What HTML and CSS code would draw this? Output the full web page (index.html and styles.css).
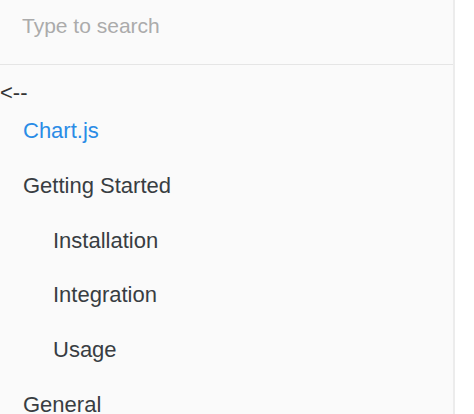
FILE: index.html
```html
<!DOCTYPE html>
<html lang="en">
<head>
  <meta charset="UTF-8">
  <meta name="viewport" content="width=device-width, initial-scale=1.0">
  <title>Chart.js docs</title>
  <link rel="stylesheet" href="styles.css">
</head>
<body>
    <div class="sidebar">
        <div class="search">
            <input type="text" placeholder="Type to search" />
        </div>
        <div class="back">&lt;--</div>
        <ul class="nav">
            <li class="active">Chart.js</li>
            <li>Getting Started</li>
            <li class="sub">Installation</li>
            <li class="sub">Integration</li>
            <li class="sub">Usage</li>
            <li>General</li>
        </ul>
    </div>
</body>
</html>
```

FILE: styles.css
```css
* {
    margin: 0;
    padding: 0;
    box-sizing: border-box;
    font-family: "Liberation Sans", Arial, sans-serif;
}
body {
    background: #fff;
    height: 100vh;
    overflow: hidden;
}
.sidebar {
    width: 455px;
    height: 100%;
    background: #fafafa;
    border-right: 2px solid #ececec;
}
.search {
    height: 65px;
    padding-top: 2px;
    border-bottom: 1px solid #e5e5e5;
}
.search input {
    width: 100%;
    height: 48px;
    border: none;
    outline: none;
    background: transparent;
    padding: 0 22px;
    font-size: 21px;
    color: #333;
}
.search input::placeholder {
    color: #ababab;
}
.back {
    margin-top: 17px;
    font-size: 22px;
    color: #333;
    line-height: 22px;
}
.nav {
    list-style: none;
}
.nav li {
    padding-left: 23px;
    font-size: 22px;
    line-height: 54.8px;
    color: #383d42;
}
.nav li.sub {
    padding-left: 53px;
}
.nav li.active {
    color: #2a8ce6;
}
```
